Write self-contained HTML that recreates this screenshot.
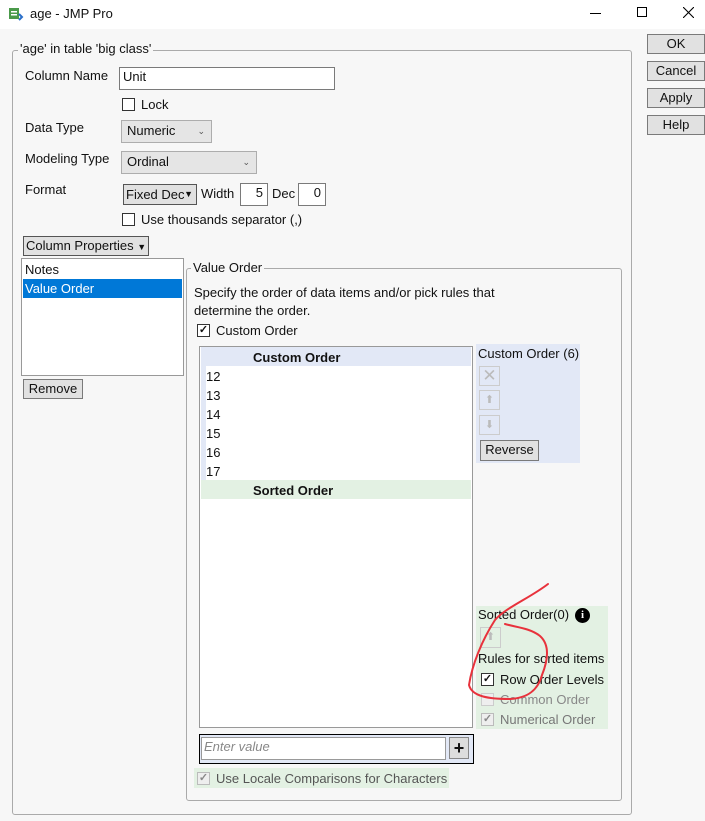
<!DOCTYPE html>
<html><head><meta charset="utf-8"><style>
*{box-sizing:border-box}
body{margin:0;width:705px;height:821px;background:#f7f7f7;font-family:"Liberation Sans",sans-serif;font-size:13px;color:#111;position:relative;overflow:hidden}
.a{position:absolute;white-space:nowrap}
.btn{position:absolute;background:#e1e1e1;border:1px solid #7a7a7a;text-align:center;line-height:18px;white-space:nowrap}
.inp{position:absolute;background:#fff;border:1px solid #7a7a7a}
.cb{position:absolute;width:13px;height:13px;border:1px solid #333;background:#fff;font-size:11px;line-height:11px;text-align:center;font-weight:bold}
.dd{position:absolute;background:#e5e5e5;border:1px solid #adadad;padding-left:5px;line-height:20px;white-space:nowrap}
</style></head><body>
<div class="a" style="left:0;top:0;width:705px;height:29px;background:#fff"></div>
<svg class="a" style="left:8px;top:6px" width="16" height="16"><rect x="1" y="2" width="10" height="11" fill="#4a9a4a"/><rect x="3" y="5" width="6" height="1.5" fill="#fff"/><rect x="3" y="8" width="6" height="1.5" fill="#fff"/><path d="M11 8l3 3-3 3" stroke="#2a6fc9" stroke-width="2" fill="none"/></svg>
<div class="a" style="left:30px;top:6px;font-size:13px">age - JMP Pro</div>
<div class="a" style="left:590px;top:13px;width:11px;height:1px;background:#000"></div>
<div class="a" style="left:637px;top:7px;width:10px;height:10px;border:1px solid #000"></div>
<svg class="a" style="left:683px;top:7px" width="11" height="11"><path d="M0 0L11 11M11 0L0 11" stroke="#000" stroke-width="1.1"/></svg>

<div class="a" style="left:12px;top:50px;width:620px;height:765px;border:1px solid #aaa;border-radius:3px"></div>
<div class="a" style="left:18px;top:41px;background:#f7f7f7;padding:0 2px">'age' in table 'big class'</div>

<div class="btn" style="left:647px;top:34px;width:58px;height:20px">OK</div>
<div class="btn" style="left:647px;top:61px;width:58px;height:20px">Cancel</div>
<div class="btn" style="left:647px;top:88px;width:58px;height:20px">Apply</div>
<div class="btn" style="left:647px;top:115px;width:58px;height:20px">Help</div>

<div class="a" style="left:25px;top:68px">Column Name</div>
<div class="inp" style="left:119px;top:67px;width:216px;height:23px;padding:1px 3px">Unit</div>
<div class="cb" style="left:122px;top:98px"></div><div class="a" style="left:141px;top:97px">Lock</div>
<div class="a" style="left:25px;top:120px">Data Type</div>
<div class="dd" style="left:121px;top:120px;width:91px;height:23px">Numeric<span style="position:absolute;right:6px;font-size:9px;color:#555">⌄</span></div>
<div class="a" style="left:25px;top:151px">Modeling Type</div>
<div class="dd" style="left:121px;top:151px;width:136px;height:23px">Ordinal<span style="position:absolute;right:6px;font-size:9px;color:#555">⌄</span></div>
<div class="a" style="left:25px;top:182px">Format</div>
<div class="dd" style="left:123px;top:184px;width:74px;height:21px;background:#e1e1e1;border-color:#555;padding-left:2px;line-height:19px">Fixed Dec<span style="position:absolute;right:3px;font-size:9px">▼</span></div>
<div class="a" style="left:201px;top:186px">Width</div>
<div class="inp" style="left:240px;top:183px;width:28px;height:23px;text-align:right;padding:1px 4px">5</div>
<div class="a" style="left:272px;top:186px">Dec</div>
<div class="inp" style="left:298px;top:183px;width:28px;height:23px;text-align:right;padding:1px 4px">0</div>
<div class="cb" style="left:122px;top:213px"></div><div class="a" style="left:141px;top:212px">Use thousands separator (,)</div>

<div class="a" style="left:23px;top:236px;width:126px;height:20px;background:#e1e1e1;border:1px solid #555;padding-left:2px;line-height:18px">Column Properties <span style="font-size:9px">▼</span></div>
<div class="a" style="left:21px;top:258px;width:163px;height:118px;background:#fff;border:1px solid #999"></div>
<div class="a" style="left:25px;top:262px">Notes</div>
<div class="a" style="left:23px;top:279px;width:159px;height:19px;background:#0078d7;color:#fff;padding-left:2px;line-height:19px">Value Order</div>
<div class="btn" style="left:23px;top:379px;width:60px;height:20px">Remove</div>

<div class="a" style="left:186px;top:268px;width:436px;height:533px;border:1px solid #aaa;border-radius:3px"></div>
<div class="a" style="left:191px;top:260px;background:#f7f7f7;padding:0 2px">Value Order</div>
<div class="a" style="left:194px;top:284px;line-height:18px">Specify the order of data items and/or pick rules that<br>determine the order.</div>
<div class="cb" style="left:197px;top:324px">✓</div><div class="a" style="left:216px;top:323px">Custom Order</div>

<div class="a" style="left:199px;top:346px;width:274px;height:382px;background:#fff;border:1px solid #999"></div>
<div class="a" style="left:201px;top:347px;width:270px;height:19px;background:#e2e8f6"></div>
<div class="a" style="left:201px;top:366px;width:5px;height:114px;background:#e2e8f6"></div>
<div class="a" style="left:253px;top:350px;font-weight:bold">Custom Order</div>
<div class="a" style="left:206px;top:367px;line-height:19px">12<br>13<br>14<br>15<br>16<br>17</div>
<div class="a" style="left:201px;top:480px;width:270px;height:19px;background:#e3f1e3"></div>
<div class="a" style="left:253px;top:483px;font-weight:bold">Sorted Order</div>

<div class="a" style="left:476px;top:344px;width:104px;height:119px;background:#e2e8f6"></div>
<div class="a" style="left:478px;top:346px">Custom Order (6)</div>
<div class="a" style="left:479px;top:366px;width:21px;height:20px;border:1px solid #ccc;color:#bbb;text-align:center;font-size:17px;line-height:18px">✕</div>
<div class="a" style="left:479px;top:390px;width:21px;height:20px;border:1px solid #ccc;color:#bbb;text-align:center;font-size:11px;line-height:18px">⬆</div>
<div class="a" style="left:479px;top:415px;width:21px;height:20px;border:1px solid #ccc;color:#bbb;text-align:center;font-size:11px;line-height:18px">⬇</div>
<div class="btn" style="left:480px;top:440px;width:59px;height:21px">Reverse</div>

<div class="a" style="left:476px;top:606px;width:132px;height:123px;background:#e3f1e3"></div>
<div class="a" style="left:478px;top:607px">Sorted Order(0)</div>
<div class="a" style="left:575px;top:608px;width:15px;height:15px;border-radius:50%;background:#000;color:#fff;font-size:11px;font-weight:bold;text-align:center;line-height:15px;font-family:'Liberation Serif',serif">i</div>
<div class="a" style="left:480px;top:627px;width:21px;height:21px;border:1px solid #ccc;color:#bbb;text-align:center;font-size:11px;line-height:19px">⬆</div>
<div class="a" style="left:478px;top:651px">Rules for sorted items</div>
<div class="cb" style="left:481px;top:673px">✓</div><div class="a" style="left:500px;top:672px">Row Order Levels</div>
<div class="cb" style="left:481px;top:693px;border-color:#ccc;background:#eee"></div><div class="a" style="left:500px;top:692px;color:#888">Common Order</div>
<div class="cb" style="left:481px;top:713px;border-color:#bbb;background:#eee;color:#888">✓</div><div class="a" style="left:500px;top:712px;color:#777">Numerical Order</div>

<div class="a" style="left:199px;top:734px;width:275px;height:30px;background:#e2e8f6;border:1px solid #000"></div>
<div class="a" style="left:201px;top:737px;width:245px;height:23px;background:#fff;border:1px solid #999;color:#888;font-style:italic;padding:1px 2px">Enter value</div>
<div class="a" style="left:449px;top:737px;width:20px;height:22px;background:#ddd;border:1px solid #888;text-align:center;font-weight:bold;font-size:18px;line-height:20px">+</div>

<div class="a" style="left:194px;top:768px;width:255px;height:20px;background:#e3f1e3"></div>
<div class="cb" style="left:197px;top:772px;border-color:#bbb;background:#eee;color:#888">✓</div><div class="a" style="left:216px;top:771px;color:#555">Use Locale Comparisons for Characters</div>

<svg class="a" style="left:0;top:0" width="705" height="821"><path d="M548 584 C530 598 505 608 495 620 C482 640 472 665 469 685 C472 697 490 699 510 699 C528 698 538 690 542 675 C548 660 550 645 540 636 C530 628 515 627 505 624" stroke="#e8323c" stroke-width="2" fill="none" stroke-linecap="round"/></svg>
</body></html>
